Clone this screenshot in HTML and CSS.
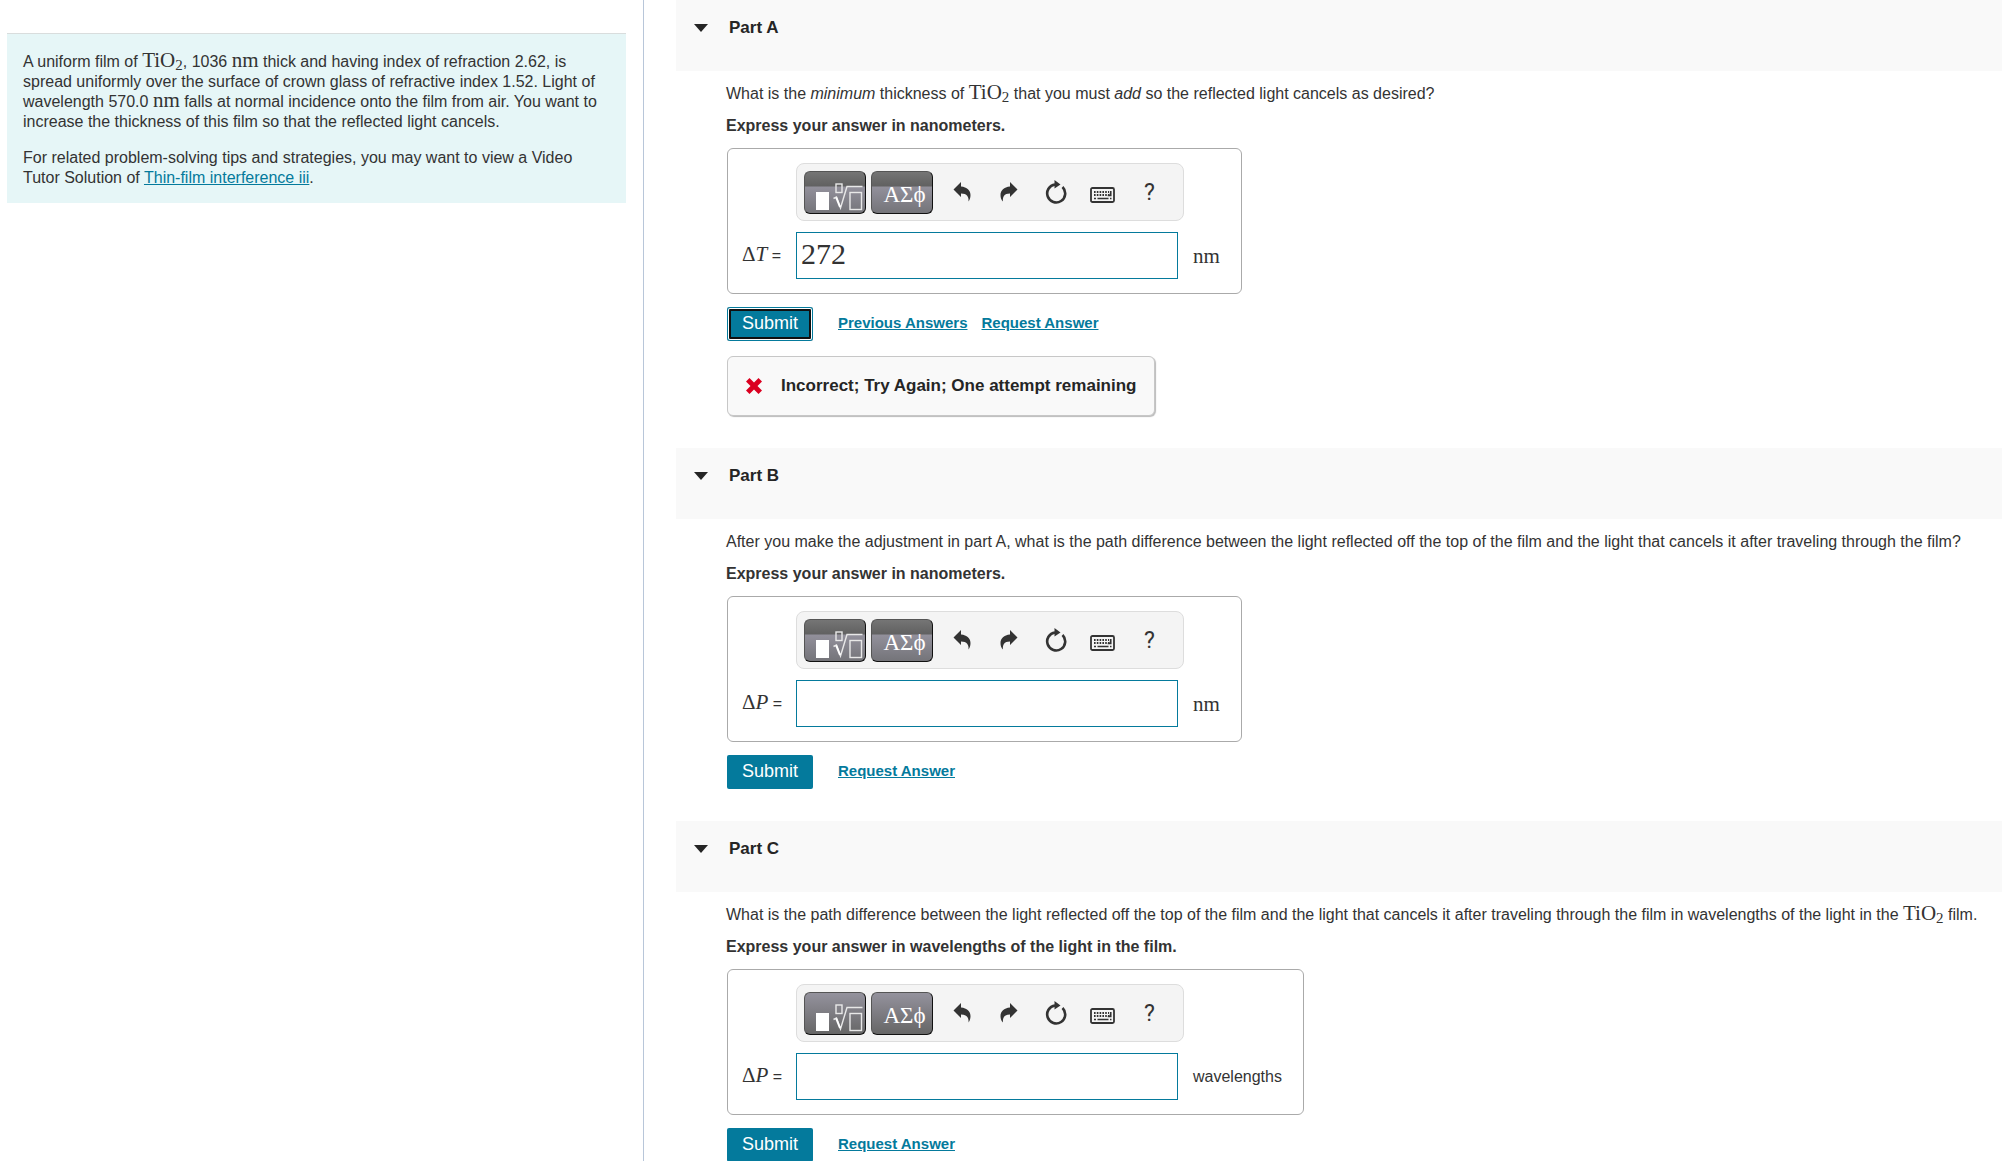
FILE: index.html
```html
<!DOCTYPE html>
<html lang="en">
<head>
  <meta charset="UTF-8">
  <meta name="viewport" content="width=device-width, initial-scale=1">
  <title>Thin-film interference</title>
  <link rel="stylesheet" href="styles.css">
</head>
<body>
  <!-- Shared icons -->
  <svg class="icon-defs" aria-hidden="true">
    <symbol id="icon-template" viewBox="0 0 60 41">
      <rect x="11" y="20" width="13" height="18" fill="#fff"/>
      <g fill="none" stroke="#e8e8e8" stroke-width="1.4">
        <rect x="31" y="12" width="6" height="8.5"/>
        <path d="M28.5 26.5l3-1.500 4 11L42 14.500h15.500"/>
        <rect x="45" y="20.500" width="11.500" height="17"/>
      </g>
      <path d="M31.200 25.500l3.800 9.500" stroke="#fff" stroke-width="2"/>
    </symbol>
    <symbol id="icon-undo" viewBox="0 0 18 20">
      <path d="M0.500 7.500L8 0v4.500c6 .5 9.500 4 9.500 8.500 0 2.800-.8 4.800-2 6.500.5-4.500-1.500-8-7.500-8V15z" fill="#333"/>
    </symbol>
    <symbol id="icon-redo" viewBox="0 0 18 20">
      <path d="M17.500 7.500L10 0v4.500C4 5 .5 8.500.5 13c0 2.800.8 4.800 2.500 6.500-.5-4.500 1-8 7-8V15z" fill="#333"/>
    </symbol>
    <symbol id="icon-reset" viewBox="0 0 22 24">
      <path d="M17.500 7A9 9 0 1 1 10 4.500" fill="none" stroke="#333" stroke-width="2.600"/>
      <path d="M9.500 0l6 4.500-6 4z" fill="#333"/>
    </symbol>
    <symbol id="icon-keyboard" viewBox="0 0 25 16">
      <rect x="1" y="1" width="23" height="14" rx="1.500" fill="none" stroke="#333" stroke-width="1.800"/>
      <path d="M4 5h15M4 8h16" stroke="#333" stroke-width="1.800" stroke-dasharray="1.600 1.200"/>
      <path d="M4 11.500h2M7.500 11.500h11M20 11.500h1.500M20.700 4v4.500h-3" fill="none" stroke="#333" stroke-width="1.700"/>
    </symbol>
    <symbol id="icon-wrong" viewBox="0 0 18 18">
      <path d="M4.500 1L9 5.500 13.500 1 17 4.500 12.500 9l4.500 4.500-3.500 3.500L9 12.500 4.500 17 1 13.500 5.500 9 1 4.500z" fill="#db0020"/>
    </symbol>
  </svg>

  <main class="page">
    <aside class="intro">
      <div class="intro-box">
        <p>A uniform film of <span class="math">TiO<sub>2</sub></span>, 1036 <span class="math">nm</span> thick and having index of refraction 2.62, is spread uniformly over the surface of crown glass of refractive index 1.52. Light of wavelength 570.0 <span class="math">nm</span> falls at normal incidence onto the film from air. You want to increase the thickness of this film so that the reflected light cancels.</p>
        <p>For related problem-solving tips and strategies, you may want to view a Video Tutor Solution of <a href="#">Thin-film interference iii</a>.</p>
      </div>
    </aside>

    <div class="parts">
      <!-- Part A -->
      <section class="part">
        <header class="part-header">
          <span class="caret"></span>
          <h2>Part A</h2>
        </header>
        <div class="part-body">
          <p class="question">What is the <em>minimum</em> thickness of <span class="math">TiO<sub>2</sub></span> that you must <em>add</em> so the reflected light cancels as desired?</p>
          <p class="instructions">Express your answer in nanometers.</p>
          <div class="answer-box">
            <div class="toolbar">
              <button type="button" class="key" aria-label="Templates"><svg class="key-icon"><use href="#icon-template"/></svg></button>
              <button type="button" class="key">ΑΣϕ</button>
              <button type="button" class="tool" aria-label="Undo"><svg width="18" height="20"><use href="#icon-undo"/></svg></button>
              <button type="button" class="tool" aria-label="Redo"><svg width="18" height="20"><use href="#icon-redo"/></svg></button>
              <button type="button" class="tool" aria-label="Reset"><svg width="22" height="24"><use href="#icon-reset"/></svg></button>
              <button type="button" class="tool tool-keyboard" aria-label="Keyboard shortcuts"><svg width="25" height="16"><use href="#icon-keyboard"/></svg></button>
              <button type="button" class="tool">?</button>
            </div>
            <label for="answerA"><span class="math">Δ<i>T</i></span> =</label>
            <input type="text" id="answerA" value="272">
            <span class="unit math">nm</span>
          </div>
          <div class="actions">
            <button type="button" class="submit submit-focused">Submit</button>
            <a href="#">Previous Answers</a>
            <a href="#">Request Answer</a>
          </div>
          <div class="feedback">
            <svg width="18" height="18" aria-hidden="true"><use href="#icon-wrong"/></svg>
            <span>Incorrect; Try Again; One attempt remaining</span>
          </div>
        </div>
      </section>

      <!-- Part B -->
      <section class="part">
        <header class="part-header">
          <span class="caret"></span>
          <h2>Part B</h2>
        </header>
        <div class="part-body">
          <p class="question">After you make the adjustment in part A, what is the path difference between the light reflected off the top of the film and the light that cancels it after traveling through the film?</p>
          <p class="instructions">Express your answer in nanometers.</p>
          <div class="answer-box">
            <div class="toolbar">
              <button type="button" class="key" aria-label="Templates"><svg class="key-icon"><use href="#icon-template"/></svg></button>
              <button type="button" class="key">ΑΣϕ</button>
              <button type="button" class="tool" aria-label="Undo"><svg width="18" height="20"><use href="#icon-undo"/></svg></button>
              <button type="button" class="tool" aria-label="Redo"><svg width="18" height="20"><use href="#icon-redo"/></svg></button>
              <button type="button" class="tool" aria-label="Reset"><svg width="22" height="24"><use href="#icon-reset"/></svg></button>
              <button type="button" class="tool tool-keyboard" aria-label="Keyboard shortcuts"><svg width="25" height="16"><use href="#icon-keyboard"/></svg></button>
              <button type="button" class="tool">?</button>
            </div>
            <label for="answerB"><span class="math">Δ<i>P</i></span> =</label>
            <input type="text" id="answerB">
            <span class="unit math">nm</span>
          </div>
          <div class="actions">
            <button type="button" class="submit">Submit</button>
            <a href="#">Request Answer</a>
          </div>
        </div>
      </section>

      <!-- Part C -->
      <section class="part">
        <header class="part-header">
          <span class="caret"></span>
          <h2>Part C</h2>
        </header>
        <div class="part-body">
          <p class="question">What is the path difference between the light reflected off the top of the film and the light that cancels it after traveling through the film in wavelengths of the light in the <span class="math">TiO<sub>2</sub></span> film.</p>
          <p class="instructions">Express your answer in wavelengths of the light in the film.</p>
          <div class="answer-box">
            <div class="toolbar">
              <button type="button" class="key key-plain" aria-label="Templates"><svg class="key-icon"><use href="#icon-template"/></svg></button>
              <button type="button" class="key key-plain">ΑΣϕ</button>
              <button type="button" class="tool" aria-label="Undo"><svg width="18" height="20"><use href="#icon-undo"/></svg></button>
              <button type="button" class="tool" aria-label="Redo"><svg width="18" height="20"><use href="#icon-redo"/></svg></button>
              <button type="button" class="tool" aria-label="Reset"><svg width="22" height="24"><use href="#icon-reset"/></svg></button>
              <button type="button" class="tool tool-keyboard" aria-label="Keyboard shortcuts"><svg width="25" height="16"><use href="#icon-keyboard"/></svg></button>
              <button type="button" class="tool">?</button>
            </div>
            <label for="answerC"><span class="math">Δ<i>P</i></span> =</label>
            <input type="text" id="answerC">
            <span class="unit">wavelengths</span>
          </div>
          <div class="actions">
            <button type="button" class="submit">Submit</button>
            <a href="#">Request Answer</a>
          </div>
        </div>
      </section>
    </div>
  </main>
</body>
</html>
```
FILE: styles.css
```css
* {
  box-sizing: border-box;
}
body {
  margin: 0;
  background: #fff;
  color: #333;
  font-family: "Liberation Sans", Arial, sans-serif;
  font-size: 16px;
  line-height: 20px;
}
p, h2 {
  margin: 0;
}
a {
  color: #047a9c;
}
.icon-defs {
  display: none;
}
.page {
  display: flex;
  min-height: 100vh;
}

/* Problem introduction */
.intro {
  flex: 0 0 644px;
  padding: 33px 17px 0 7px;
  border-right: 1px solid #b8c6d9;
}
.intro-box {
  padding: 18px 16px 15px;
  border-top: 1px solid #d9dddd;
  background: #e6f6f7;
}
.intro-box p + p {
  margin-top: 16px;
}
.math {
  font-family: "Liberation Serif", "Times New Roman", serif;
  font-size: 21px;
  line-height: 0;
}
.math sub {
  font-size: 15px;
  line-height: 0;
  vertical-align: -3px;
}

/* Parts */
.parts {
  flex: 1;
  min-width: 0;
  padding-left: 32px;
}
.part + .part {
  margin-top: 32px;
}
.part-header {
  display: flex;
  align-items: center;
  gap: 21px;
  height: 71px;
  padding: 0 18px 15px;
  background: #f9f9f9;
  color: #252525;
}
.part-header h2 {
  font-size: 17px;
  line-height: 20px;
}
.caret {
  border: 7px solid transparent;
  border-top: 8px solid #252525;
  border-bottom: 0;
}
.part-body {
  padding: 13px 0 0 50px;
}
.instructions {
  margin: 12px 0;
  font-weight: bold;
}

/* Answer entry */
.answer-box {
  display: grid;
  grid-template-columns: 54px 382px auto;
  align-items: center;
  width: max-content;
  margin-left: 1px;
  padding: 14px 21px 14px 14px;
  border: 1px solid #aaa;
  border-radius: 6px;
  row-gap: 11px;
}
.toolbar {
  grid-column: 2 / 4;
  display: flex;
  align-items: center;
  width: 388px;
  height: 58px;
  padding-left: 7px;
  border: 1px solid #ddd;
  border-radius: 8px;
  background: #f4f4f4;
}
.key {
  width: 62px;
  height: 43px;
  margin-right: 5px;
  padding: 5px 0 0 5px;
  border: 1px solid #111;
  border-top-color: #555;
  border-left-color: #555;
  border-radius: 6px;
  background: linear-gradient(#757575, #616161 14px, #92909b 15px, #747479);
  color: #fff;
  font-family: "Liberation Serif", "Times New Roman", serif;
  font-size: 23px;
  line-height: 28px;
}
.key-plain {
  background: linear-gradient(#94929d, #666);
}
.key:first-child {
  padding: 0;
}
.key-icon {
  display: block;
  width: 60px;
  height: 41px;
}
.tool {
  display: flex;
  align-items: center;
  justify-content: center;
  width: 47px;
  height: 43px;
  padding: 0;
  border: 0;
  background: none;
  color: #333;
  font-family: Roboto, sans-serif;
  font-size: 23px;
}
.tool-keyboard {
  padding-top: 6px;
}
.answer-box input {
  width: 382px;
  height: 47px;
  padding: 0 4px 4px;
  border: 1px solid #047a9c;
  background: #fff;
  color: #333;
  font-family: "Liberation Serif", "Times New Roman", serif;
  font-size: 30px;
}
.unit {
  padding-left: 15px;
}

/* Submit row */
.actions {
  display: flex;
  align-items: center;
  gap: 14px;
  margin: 13px 0 0 1px;
}
.actions a {
  padding-bottom: 2px;
  font-size: 15px;
  font-weight: bold;
}
.submit {
  width: 86px;
  height: 34px;
  margin-right: 11px;
  padding: 0 0 2px;
  border: 0;
  border-radius: 2px;
  background: #047a9c;
  color: #fff;
  font-family: inherit;
  font-size: 18px;
}
.submit-focused {
  border-radius: 3px;
  box-shadow: inset 0 0 0 1px #047a9c, inset 0 0 0 2px #fff, inset 0 0 0 4px #101010;
}
.feedback {
  display: flex;
  align-items: center;
  gap: 18px;
  width: max-content;
  height: 60px;
  margin: 15px 0 0 1px;
  padding: 0 17px;
  border: 1px solid #c7c7c7;
  border-radius: 6px;
  background: #f9f9f9;
  box-shadow: 1px 1px 1px #bbb;
  color: #252525;
  font-size: 17px;
  font-weight: bold;
}
```
